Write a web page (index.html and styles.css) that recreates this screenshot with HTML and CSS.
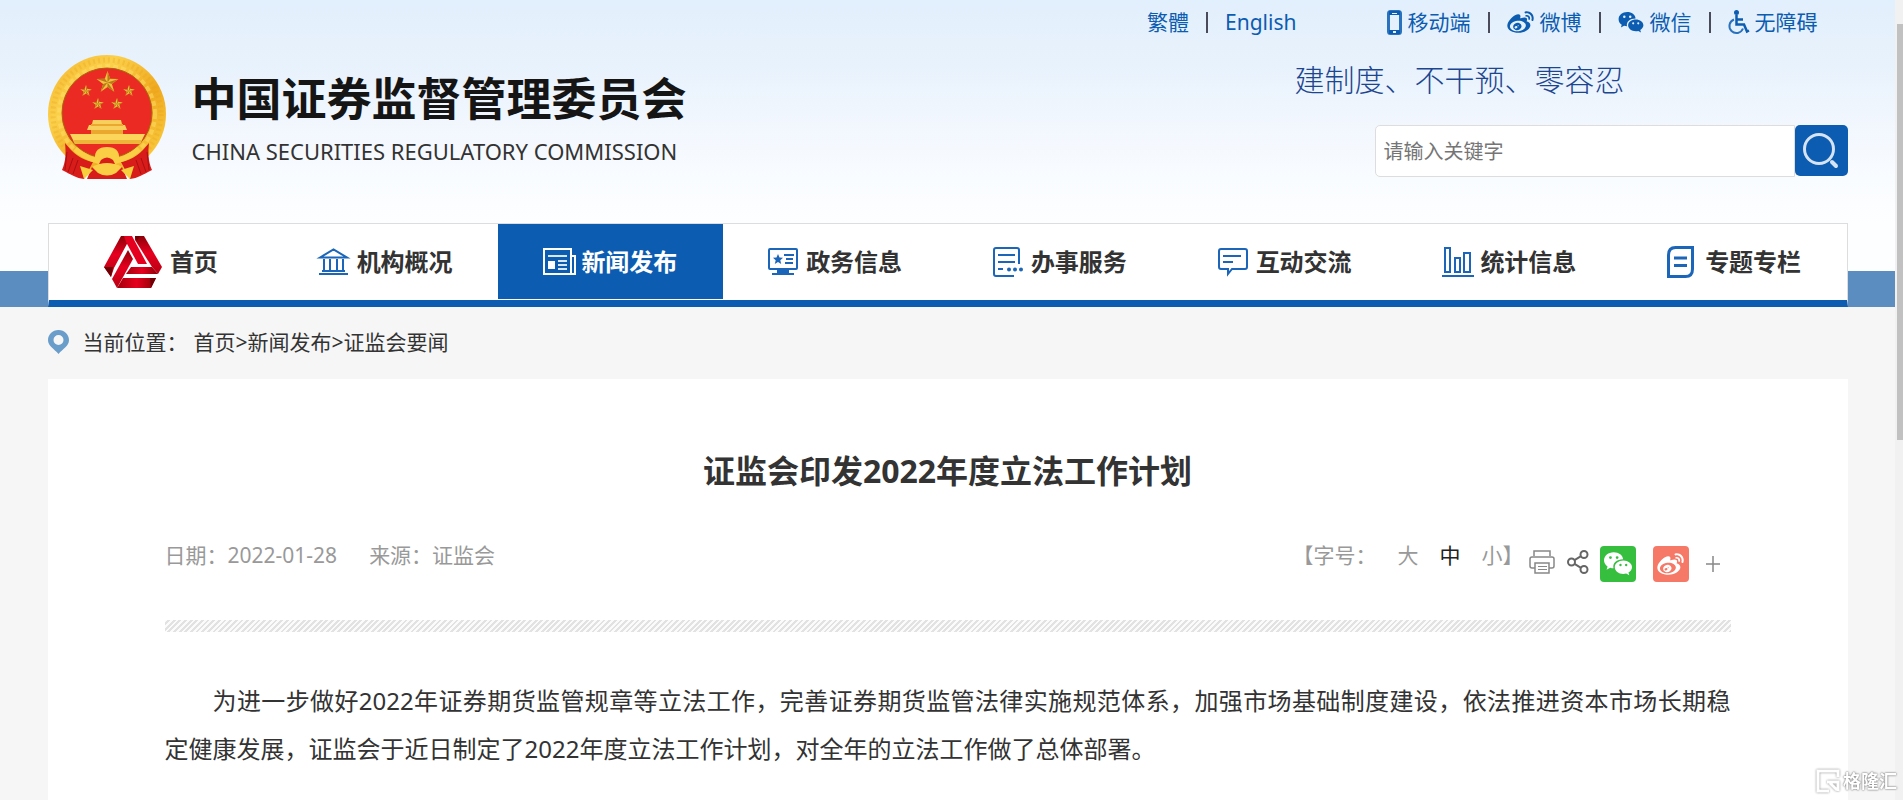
FILE: index.html
```html
<!DOCTYPE html>
<html lang="zh-CN">
<head>
    <meta charset="UTF-8">
    <meta name="viewport" content="width=device-width, initial-scale=1.0">
    <title>证监会印发2022年度立法工作计划</title>
    <link rel="stylesheet" href="styles.css">
</head>
<body>

<!-- shared icons -->
<svg class="sprite" aria-hidden="true">
    <symbol id="weibo" viewBox="0 2 24 20">
        <path d="M10.098 20.323c-3.977.391-7.414-1.406-7.672-4.02-.259-2.609 2.759-5.047 6.74-5.441 3.979-.394 7.413 1.404 7.671 4.018.259 2.6-2.759 5.049-6.737 5.439l-.002.004zM9.05 17.219c-.384.616-1.208.884-1.829.602-.612-.279-.793-.991-.406-1.593.379-.595 1.176-.861 1.793-.601.622.263.82.972.442 1.592zm1.27-1.627c-.141.237-.449.353-.689.253-.236-.09-.313-.361-.177-.586.138-.227.436-.346.672-.24.239.09.315.36.18.601l.014-.028zm.176-2.719c-1.893-.493-4.033.45-4.857 2.118-.836 1.704-.026 3.591 1.886 4.21 1.983.64 4.318-.341 5.132-2.179.8-1.793-.201-3.642-2.161-4.149zm7.563-1.224c-.346-.105-.57-.18-.405-.615.375-.977.42-1.804 0-2.404-.781-1.112-2.915-1.053-5.364-.03 0 0-.766.331-.571-.271.376-1.217.315-2.224-.27-2.809-1.338-1.337-4.869.045-7.888 3.08C1.309 10.87 0 13.273 0 15.348c0 3.981 5.099 6.395 10.086 6.395 6.536 0 10.888-3.801 10.888-6.82 0-1.822-1.547-2.854-2.915-3.284v.01zm1.908-5.092c-.766-.856-1.908-1.187-2.96-.962-.436.09-.706.511-.616.932.09.42.511.691.932.602.511-.105 1.067.044 1.442.465.376.421.466.977.316 1.473-.136.406.089.856.51.992.405.119.857-.105.992-.512.33-1.021.12-2.178-.646-3.035l.03.045zm2.418-2.195c-1.576-1.757-3.905-2.419-6.054-1.968-.496.104-.812.587-.706 1.081.104.496.586.813 1.082.707 1.532-.331 3.185.15 4.296 1.383 1.112 1.246 1.429 2.943.947 4.416-.165.48.106 1.007.586 1.157.479.165.991-.104 1.157-.586.675-2.088.241-4.478-1.338-6.235l.03.045z"/>
    </symbol>
    <symbol id="wechat" viewBox="0 0 26 22">
        <path fill-rule="evenodd" d="M9 0C4 0 0 3.300 0 7.500c0 2.400 1.300 4.500 3.300 5.800L2.400 16.300l3.400-1.800c1 .3 2 .5 3 .5-1-5 3-8.300 9-8.300C17.500 2.800 13.700 0 9 0zM6 3.700a1.300 1.300 0 1 1 0 2.600 1.300 1.300 0 0 1 0-2.600zm6.200 0a1.300 1.300 0 1 1 0 2.600 1.300 1.300 0 0 1 0-2.600z"/>
        <path fill-rule="evenodd" d="M18 7.800c-4.500 0-8 2.800-8 6.200s3.500 6.200 8 6.200c.9 0 1.800-.1 2.600-.4l2.900 1.600-.8-2.600c2-1.100 3.300-2.900 3.300-4.800 0-3.400-3.600-6.200-8-6.200zm-2.700 3a1.100 1.100 0 1 1 0 2.200 1.100 1.100 0 0 1 0-2.200zm5.300 0a1.100 1.100 0 1 1 0 2.200 1.100 1.100 0 0 1 0-2.200z"/>
    </symbol>
    <symbol id="star" viewBox="-10 -10 20 20">
        <path fill="#f3c23c" d="M0-10 2.300-3.200 9.500-3.100 3.800 1.200 5.900 8.100 0 4-5.900 8.100-3.800 1.200-9.500-3.100-2.300-3.200z"/>
        <path fill="#b87a1a" d="M0-10 2.300-3.200 0 0zM9.500-3.100 3.800 1.200 0 0zM5.900 8.100 0 4V0zM-5.900 8.100-3.800 1.200 0 0zM-9.500-3.100-2.300-3.200 0 0z"/>
    </symbol>
</svg>

<div class="page">
    <header class="header">
        <div class="container header-inner">
            <a class="brand" href="#">
                <svg class="emblem" viewBox="0 0 119 125" role="img" aria-label="国徽">
                    <defs>
                        <linearGradient id="gold" x1="0" y1="0" x2="1" y2="1">
                            <stop offset="0" stop-color="#f5b52c"/>
                            <stop offset=".3" stop-color="#fbd04a"/>
                            <stop offset=".6" stop-color="#f0a91f"/>
                            <stop offset="1" stop-color="#fcd648"/>
                        </linearGradient>
                    </defs>
                    <circle cx="59" cy="59" r="59" fill="url(#gold)"/>
                    <circle cx="59" cy="59" r="54" fill="none" stroke="#e49b1c" stroke-width="5" stroke-dasharray="2 3" opacity=".25"/>
                    <circle cx="59" cy="59" r="48" fill="none" stroke="#ffe06a" stroke-width="4" stroke-dasharray="5 3" opacity=".5"/>
                    <circle cx="59" cy="58" r="45" fill="#ec2a24" stroke="#a8650f"/>
                    <use href="#star" x="48" y="16" width="23" height="23"/>
                    <use href="#star" x="32" y="30" width="12" height="12"/>
                    <use href="#star" x="75" y="30" width="12" height="12"/>
                    <use href="#star" x="44" y="43" width="12" height="12"/>
                    <use href="#star" x="63" y="43" width="12" height="12"/>
                    <path fill="#f8cf5c" d="M45 65h28l1 4H44zM41 70h36l2 5H39z"/>
                    <path fill="#eaa82e" d="M43 69h32v2H43zM43 75h32v4H43z"/>
                    <path fill="#fbd65a" d="M22 79h75l-5 10H27z"/>
                    <path fill="#efb43a" d="M25 85h69l-2 4H27z"/>
                    <path fill="#d81c1a" d="M17 88c8 10 16 17 28 19l-9 17c-8-1-12-4-22-9 4-9 4-18 3-27zM101 88c-8 10-16 17-28 19l9 17c8-1 12-4 22-9-4-9-4-18-3-27z"/>
                    <path stroke="#a90f12" fill="none" d="M19 97l-2 18M25 103l-5 14M30 105l-5 14M99 97l2 18M93 103l5 14M88 105l5 14"/>
                    <path fill="#d81c1a" d="M44 112h30l5 12H39z"/>
                    <path fill="#f8cf3d" d="M32 111l13 4-9 9zM86 111l-13 4 9 9z"/>
                    <path fill="none" stroke="#fbcf45" stroke-width="5" d="M27 94q15 13 32 13t32-13"/>
                    <path fill="#fbcf45" d="M47 104q-1-12 12-12t12 12z"/>
                    <path fill="#d81c1a" d="M53 105q6-5 12 0l2 4H51z"/>
                    <path fill="#fbcf45" d="M44 112q15-8 30 0l-6 6q-9 5-18 0z"/>
                </svg>
                <span class="brand-text">
                    <span class="brand-cn">中国证券监督管理委员会</span>
                    <span class="brand-en">CHINA SECURITIES REGULATORY COMMISSION</span>
                </span>
            </a>

            <div class="header-right">
                <div class="top-links">
                    <div class="link-group">
                        <a href="#">繁體</a>
                        <span class="sep"></span>
                        <a href="#">English</a>
                    </div>
                    <div class="link-group">
                        <a href="#">
                            <svg width="15" height="25" viewBox="0 0 15 25"><rect x="1.500" y="1.500" width="12" height="22" rx="2" fill="none" stroke="#2a72be" stroke-width="3"/><path fill="#0c5cb1" d="M2 20h11v4H2zM2 1h11v4H2z"/><path fill="#e8f2fc" d="M5 3h5v1H5zM6 21h3v2H6z"/></svg>
                            移动端
                        </a>
                        <span class="sep"></span>
                        <a href="#"><svg width="27" height="22"><use href="#weibo"/></svg>微博</a>
                        <span class="sep"></span>
                        <a href="#"><svg width="26" height="21"><use href="#wechat"/></svg>微信</a>
                        <span class="sep"></span>
                        <a href="#">
                            <svg width="21" height="24" viewBox="0 0 21 24"><circle cx="8.500" cy="2.500" r="2.500"/><path fill="none" stroke="currentColor" stroke-width="2.500" d="M8.500 5v9.500H16l3 7 2-1M9 9.500h6"/><path fill="none" stroke="#2a72be" stroke-width="2" d="M6 9.500a7 7 0 1 0 9 9"/></svg>
                            无障碍
                        </a>
                    </div>
                </div>
                <p class="slogan">建制度、不干预、零容忍</p>
                <form class="search" action="#">
                    <input type="text" id="keyword" placeholder="请输入关键字" aria-label="请输入关键字">
                    <button type="submit" aria-label="搜索">
                        <svg class="line" width="36" height="36" viewBox="0 0 36 36" stroke="#d5e3f2"><circle cx="16" cy="16" r="14.500" stroke-width="3"/><path stroke-width="4" stroke-linecap="round" d="M29 29l4 4"/></svg>
                    </button>
                </form>
            </div>
        </div>
    </header>

    <div class="nav-wrap">
        <nav class="container nav">
            <a class="home" href="#">
                <svg width="58" height="52" viewBox="0 0 58 52">
                    <defs>
                        <linearGradient id="redA" x1="0" y1="0" x2="0" y2="1"><stop offset="0" stop-color="#8c0008"/><stop offset=".45" stop-color="#e6001f"/><stop offset="1" stop-color="#b80012"/></linearGradient>
                        <linearGradient id="redB" x1="0" y1="0" x2="1" y2="0"><stop offset="0" stop-color="#a3000c"/><stop offset=".5" stop-color="#e6001f"/><stop offset="1" stop-color="#8a0006"/></linearGradient>
                    </defs>
                    <path fill="url(#redA)" d="M17 0h4l3 6L10 32 7 41 0 31z"/>
                    <path fill="#e6001f" d="M20 0h8l15 28h-9L22 6z"/>
                    <path fill="url(#redA)" d="M31 0h9l18 31-4 7-6-7-17-27z"/>
                    <path fill="url(#redB)" d="M27 31h21l6 7H22z"/>
                    <path fill="url(#redA)" d="M24 14l5 9-16 29-5-9z"/>
                    <path fill="url(#redB)" d="M19 42h33l-5 10H13z"/>
                    <path fill="#6e0005" d="M31 0h5l-3 5zM0 31h9l-2 10zM46 42h6l-5 10z"/>
                </svg>
                首页
            </a>
            <a href="#">
                <svg class="line" width="30" height="28" viewBox="0 0 30 28" stroke="currentColor" stroke-width="2"><path d="M1 9.500 14.500 1.500 28 9.500zM0 26h29M3 23h23" /><path d="M5 11v12M11 11v12M18 11v12M24 11v12"/></svg>
                机构概况
            </a>
            <a class="active" href="#">
                <svg class="line" width="30" height="28" viewBox="0 0 30 28" stroke="currentColor" stroke-width="2"><path d="M1 26V1h27v25zM28 8h4v18h-4"/><path opacity=".85" d="M5 8h19M15 13h9M15 17h9M15 21h9"/><path fill="currentColor" stroke="none" d="M5 13h7v8H5z"/></svg>
                新闻发布
            </a>
            <a href="#">
                <svg class="line" width="30" height="28" viewBox="0 0 30 28" stroke="currentColor" stroke-width="2"><rect x="1" y="1" width="28" height="20" rx="1"/><path d="M16 7h10M18 11h7M17 15h8"/><path fill="currentColor" stroke="none" d="M10 6l1.500 3.500 3.500.3-2.700 2.400.9 3.800-3.200-2-3.200 2 .9-3.800L5 9.800l3.500-.3zM9 22h12v3h5v2H4v-2h5z"/></svg>
                政务信息
            </a>
            <a href="#">
                <svg class="line" width="30" height="30" viewBox="0 0 30 30" stroke="currentColor" stroke-width="2"><path d="M26 17V3q0-2-2-2H3Q1 1 1 3v24q0 2 2 2h18"/><path d="M5 8h17M5 15h17M5 22h5"/><path stroke-width="4" stroke-linecap="round" d="M16 22.500h0M22 22.500h0M28 22.500h0"/></svg>
                办事服务
            </a>
            <a href="#">
                <svg class="line" width="30" height="28" viewBox="0 0 30 28" stroke="currentColor" stroke-width="2"><path d="M3 1h24q2 0 2 2v16q0 2-2 2H14l-4 5v-5H3q-2 0-2-2V3q0-2 2-2zM5 8h18M5 14h10"/></svg>
                互动交流
            </a>
            <a href="#">
                <svg class="line" width="30" height="30" viewBox="0 0 30 30" stroke="currentColor" stroke-width="2"><path d="M3 25V1h5v24zM13 25V11h5v14zM22 25V6h6v19zM0 29h32"/></svg>
                统计信息
            </a>
            <a href="#">
                <svg class="line" width="30" height="32" viewBox="0 0 30 32" stroke="currentColor" stroke-width="3"><path d="M1.500 30.500V9q0-7.500 7-7.500H25.500V23q0 7.500-7 7.500z"/><path d="M7 12h13M7 19.500h13"/></svg>
                专题专栏
            </a>
        </nav>
    </div>

    <div class="container breadcrumb">
        <svg width="21" height="24" viewBox="0 0 21 24"><path fill="#6a9dc9" fill-rule="evenodd" d="M10.500 0C4.500 0 0 4.500 0 10.200 0 16 6 18.500 10.500 24 15 18.500 21 16 21 10.200 21 4.500 16.500 0 10.500 0zm0 5a5 5 0 1 1 0 10 5 5 0 0 1 0-10z"/></svg>
        <span>当前位置&#65306;</span>
        <div><a href="#">首页</a>&gt;<a href="#">新闻发布</a>&gt;<a href="#">证监会要闻</a></div>
    </div>

    <main class="container article">
        <h1>证监会印发2022年度立法工作计划</h1>
        <div class="meta">
            <div class="source">
                <span>日期&#65306;2022-01-28</span>
                <span>来源&#65306;证监会</span>
            </div>
            <div class="tools">
                <div class="font-size">
                    <span>【字号&#65306;</span>
                    <button type="button">大</button>
                    <button type="button" class="current">中</button>
                    <div><button type="button">小</button>】</div>
                </div>
                <button type="button" class="tool-btn" aria-label="打印">
                    <svg class="line" width="26" height="24" viewBox="0 0 26 24" stroke="#888" stroke-width="1.500"><path d="M5 6V1h16v5M6 18H3q-2 0-2-2V9q0-2 2-2h20q2 0 2 2v7q0 2-2 2h-3M6 13h14v10H6z"/><path stroke-width="1" d="M9 16.500h9M9 19.500h9"/></svg>
                </button>
                <button type="button" class="tool-btn" aria-label="分享">
                    <svg class="line" width="21" height="24" viewBox="0 0 21 24" stroke="#666" stroke-width="2"><circle cx="4.500" cy="12" r="3.500"/><circle cx="17" cy="4.500" r="3.500"/><circle cx="17" cy="19.500" r="3.500"/><path d="M7.500 10.200l6.500-4M7.500 13.800l6.500 4"/></svg>
                </button>
                <div class="share">
                    <button type="button" class="share-btn wechat" aria-label="微信"><svg width="28" height="24"><use href="#wechat"/></svg></button>
                    <button type="button" class="share-btn weibo" aria-label="微博"><svg width="27" height="22"><use href="#weibo"/></svg></button>
                    <button type="button" aria-label="更多"><svg width="14" height="18" viewBox="0 0 14 18" stroke="#888" stroke-width="1.500"><path d="M7 1v16M0 9h14"/></svg></button>
                </div>
            </div>
        </div>
        <div class="stripes"></div>
        <p>为进一步做好2022年证券期货监管规章等立法工作&#65292;完善证券期货监管法律实施规范体系&#65292;加强市场基础制度建设&#65292;依法推进资本市场长期稳定健康发展&#65292;证监会于近日制定了2022年度立法工作计划&#65292;对全年的立法工作做了总体部署。</p>
    </main>
</div>

<div class="scrollbar"><div class="thumb"></div></div>

<div class="watermark">
    <svg class="line" width="24" height="24" viewBox="0 0 24 24" stroke="#fff" stroke-width="3"><path d="M22 8V2H2v20h11M22 22v-9H11M14 14l7 7"/></svg>
    格隆汇
</div>

</body>
</html>
```
FILE: styles.css
```css
* {
    box-sizing: border-box;
}
body {
    margin: 0;
    min-height: 100vh;
    display: flex;
    font-family: "Noto Sans", "Noto Sans CJK SC", sans-serif;
    font-size: 21px;
    line-height: 30px;
    color: #333;
    background: #f6f6f6;
}
a {
    color: inherit;
    text-decoration: none;
}
p, h1 {
    margin: 0;
}
button {
    display: flex;
    padding: 0;
    border: none;
    background: none;
    font: inherit;
    color: inherit;
    cursor: pointer;
}
svg {
    flex: none;
    overflow: visible;
    fill: currentColor;
}
svg.line {
    fill: none;
}
.sprite {
    position: absolute;
    width: 0;
    height: 0;
}
.page {
    flex: 1;
    display: flex;
    flex-direction: column;
}
.container {
    width: 95%;
    max-width: 1800px;
    margin: 0 auto;
}

/* header */
.header {
    background: linear-gradient(#e2effc, #e8f2fc 66px, #f2f7fe 125px, #f9fcff 180px, #fdfeff);
}
.header-inner {
    display: flex;
    justify-content: space-between;
    padding-bottom: 43px;
}
.brand {
    display: flex;
    gap: 25px;
    padding-top: 55px;
    color: #151515;
}
.emblem {
    width: 119px;
    height: 125px;
}
.brand-text {
    display: flex;
    flex-direction: column;
    gap: 10px;
    padding-top: 14px;
}
.brand-cn {
    font-size: 45px;
    line-height: 60px;
    font-weight: bold;
}
.brand-en {
    font-size: 22px;
    line-height: 24px;
    color: #333;
}
.header-right {
    display: flex;
    flex-direction: column;
    align-items: flex-end;
    padding-top: 7px;
}
.top-links {
    display: flex;
    gap: 90px;
    padding-right: 30px;
    color: #0c5cb1;
}
.link-group {
    display: flex;
    align-items: center;
    gap: 17px;
}
.link-group a {
    display: flex;
    align-items: center;
    gap: 6px;
}
.sep {
    width: 2px;
    height: 21px;
    background: #4a4a5a;
}
.slogan {
    padding: 22px 223px 0 0;
    font-size: 30px;
    line-height: 42px;
    font-weight: 300;
    color: #1c4690;
}
.search {
    display: flex;
    width: 473px;
    margin-top: 24px;
}
.search input {
    flex: 1;
    min-width: 0;
    height: 52px;
    padding: 0 8px;
    border: 1px solid #ddd;
    border-radius: 5px 0 0 5px;
    font: inherit;
    font-size: 20px;
    background: #fff;
}
.search input::placeholder {
    color: #757575;
}
.search button {
    width: 53px;
    height: 51px;
    align-items: center;
    justify-content: center;
    border-radius: 5px;
    background: #0c5cb1;
}

/* navigation */
.nav-wrap {
    background: linear-gradient(#fdfeff 48px, #5b8dc0 48px);
}
.nav {
    display: flex;
    height: 84px;
    padding-bottom: 1px;
    border: 1px solid #ddd;
    border-bottom: 7px solid #0c5cb1;
    background: #fff;
}
.nav a {
    flex: 1;
    display: flex;
    align-items: center;
    justify-content: center;
    gap: 8px;
    font-size: 24px;
    font-weight: bold;
    white-space: nowrap;
}
.nav svg {
    color: #1b66b8;
}
.nav .active {
    background: #0c5cb1;
    color: #fff;
}
.nav .active svg {
    color: #fff;
}

.breadcrumb {
    display: flex;
    align-items: center;
    height: 72px;
    padding-bottom: 2px;
}
.breadcrumb span {
    margin: 0 6px 0 14px;
}

/* article */
.article {
    flex: 1;
    padding: 68px 117px 24px;
    background: #fff;
}
.article h1 {
    font-size: 32px;
    line-height: 48px;
    text-align: center;
}
.meta {
    display: flex;
    justify-content: space-between;
    margin-top: 45px;
    padding-right: 11px;
    color: #999;
}
.source {
    display: flex;
    gap: 32px;
}
.tools {
    display: flex;
    align-items: center;
    gap: 5px;
    height: 48px;
}
.font-size {
    display: flex;
    gap: 21px;
    padding-bottom: 18px;
}
.font-size div {
    display: flex;
}
.font-size .current {
    color: #222;
}
.tool-btn {
    margin-right: 7px;
    padding-bottom: 4px;
}
.share {
    display: flex;
    align-items: center;
    gap: 17px;
}
.share-btn {
    width: 36px;
    height: 36px;
    align-items: center;
    justify-content: center;
    border-radius: 4px;
    color: #fff;
}
.wechat {
    background: #36be3f;
}
.weibo {
    background: #f67866;
}
.stripes {
    height: 12px;
    margin-top: 32px;
    background: repeating-linear-gradient(-45deg, #e2e2e2 0, #e2e2e2 2px, #fbfbfb 2px, #fbfbfb 4px);
}
.article p {
    margin-top: 45px;
    font-size: 24px;
    line-height: 48px;
    text-indent: 2em;
    text-align: justify;
}

/* scroll track on the right */
.scrollbar {
    width: 8px;
    padding: 24px 0 0 2px;
    background: #f1f1f1;
}
.thumb {
    height: 416px;
    background: #c1c1c1;
}

.watermark {
    position: fixed;
    right: 6px;
    bottom: 4px;
    display: flex;
    align-items: center;
    gap: 3px;
    font-size: 18px;
    font-weight: bold;
    color: #fff;
    text-shadow: 0 0 2px #777, 0 0 2px #999;
}
.watermark svg {
    filter: drop-shadow(0 0 1px #888);
}
```
